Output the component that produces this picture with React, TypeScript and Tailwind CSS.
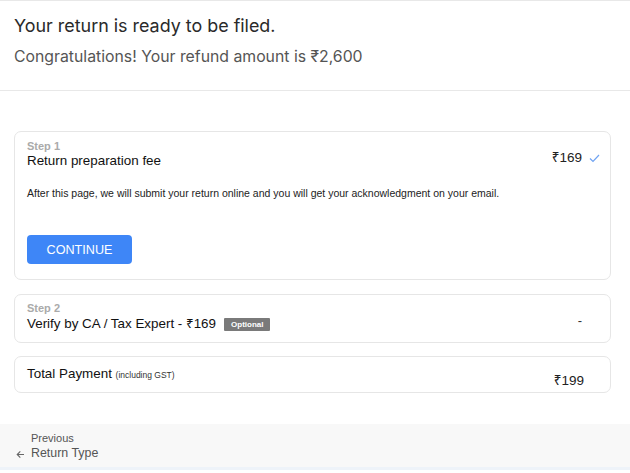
const arial = "font-['Liberation_Sans',Arial,'Noto_Sans',sans-serif]";

const Check = () => (
  <svg width="11" height="9" viewBox="0 0 11 9" fill="none" className="ml-[7px]">
    <path d="M1 4.5 L4 7.5 L10 1" stroke="#6fa3f2" strokeWidth="1.2" />
  </svg>
);

const App = () => {
  return (
    <div className="w-[630px] h-[473px] bg-white overflow-hidden flex flex-col">
      <div className="border-t border-b border-[#e8e8e8] h-[91px] px-[14px] pt-[13px] font-['Inter',sans-serif]">
        <p className="text-[17.9px] leading-[24px] text-[#2a2a2a]">Your return is ready to be filed.</p>
        <p className="mt-[8px] text-[15.8px] leading-[22px] text-[#555]">
          Congratulations! Your refund amount is ₹2,600
        </p>
      </div>

      <div className={`pl-[14px] pr-[19px] pt-[40px] flex flex-col ${arial}`}>
        <div className="border border-[#e6e6e6] rounded-[7px] pl-[12px] pr-[10px] pt-[7px] pb-[15px]">
          <div className="flex items-end justify-between">
            <div>
              <p className="text-[11px] leading-[14px] font-bold text-[#aaa]">Step 1</p>
              <p className="text-[13.4px] leading-[16px] text-[#111]">Return preparation fee</p>
            </div>
            <div className="flex items-center mb-[3px]">
              <span className="text-[13.5px] leading-[16px] text-[#222]">₹169</span>
              <Check />
            </div>
          </div>
          <p className="mt-[17px] text-[10.5px] leading-[14px] text-[#222]">
            After this page, we will submit your return online and you will get your acknowledgment on your email.
          </p>
          <button className="mt-[35px] w-[105px] h-[29px] rounded-[4px] bg-[#3e86f7] text-white text-[12.6px] leading-[16px]">
            CONTINUE
          </button>
        </div>

        <div className="mt-[14px] border border-[#e6e6e6] rounded-[7px] pl-[12px] pr-[28px] pt-[6px] pb-[9px] flex items-end justify-between">
          <div>
            <p className="text-[11px] leading-[14px] font-bold text-[#aaa]">Step 2</p>
            <div className="flex items-center">
              <span className="text-[13.4px] leading-[18px] text-[#111]">Verify by CA / Tax Expert - ₹169</span>
              <span className="ml-[8px] bg-[#7a7a7a] text-white text-[8px] font-bold leading-[13px] px-[7px] rounded-[1px]">
                Optional
              </span>
            </div>
          </div>
          <span className="text-[13px] leading-[14px] text-[#333] mb-[5px]">-</span>
        </div>

        <div className="mt-[13px] border border-[#e6e6e6] rounded-[7px] pl-[12px] pr-[26px] h-[37px] flex items-end justify-between pb-[3px]">
          <p className="text-[13.4px] leading-[16px] text-[#111] mb-[6px]">
            Total Payment <span className="text-[8.5px] text-[#333]">(including GST)</span>
          </p>
          <span className="text-[13.5px] leading-[16px] text-[#222]">₹199</span>
        </div>
      </div>

      <div className={`mt-[31px] bg-[#f8f8f8] h-[46px] border-b-[3px] border-[#eef3f9] pl-[16px] pt-[7px] ${arial}`}>
        <p className="ml-[15px] text-[11px] leading-[14px] text-[#555]">Previous</p>
        <div className="flex items-center text-[#555]">
          <svg width="9" height="9" viewBox="0 0 9 9" fill="none" className="mr-[6px] mt-[2px]">
            <path d="M8 4.5 H1.2 M4.3 1.3 L1.2 4.5 L4.3 7.7" stroke="#666" strokeWidth="1.1" />
          </svg>
          <span className="text-[12.4px] leading-[16px]">Return Type</span>
        </div>
      </div>
    </div>
  );
};

export default App;
